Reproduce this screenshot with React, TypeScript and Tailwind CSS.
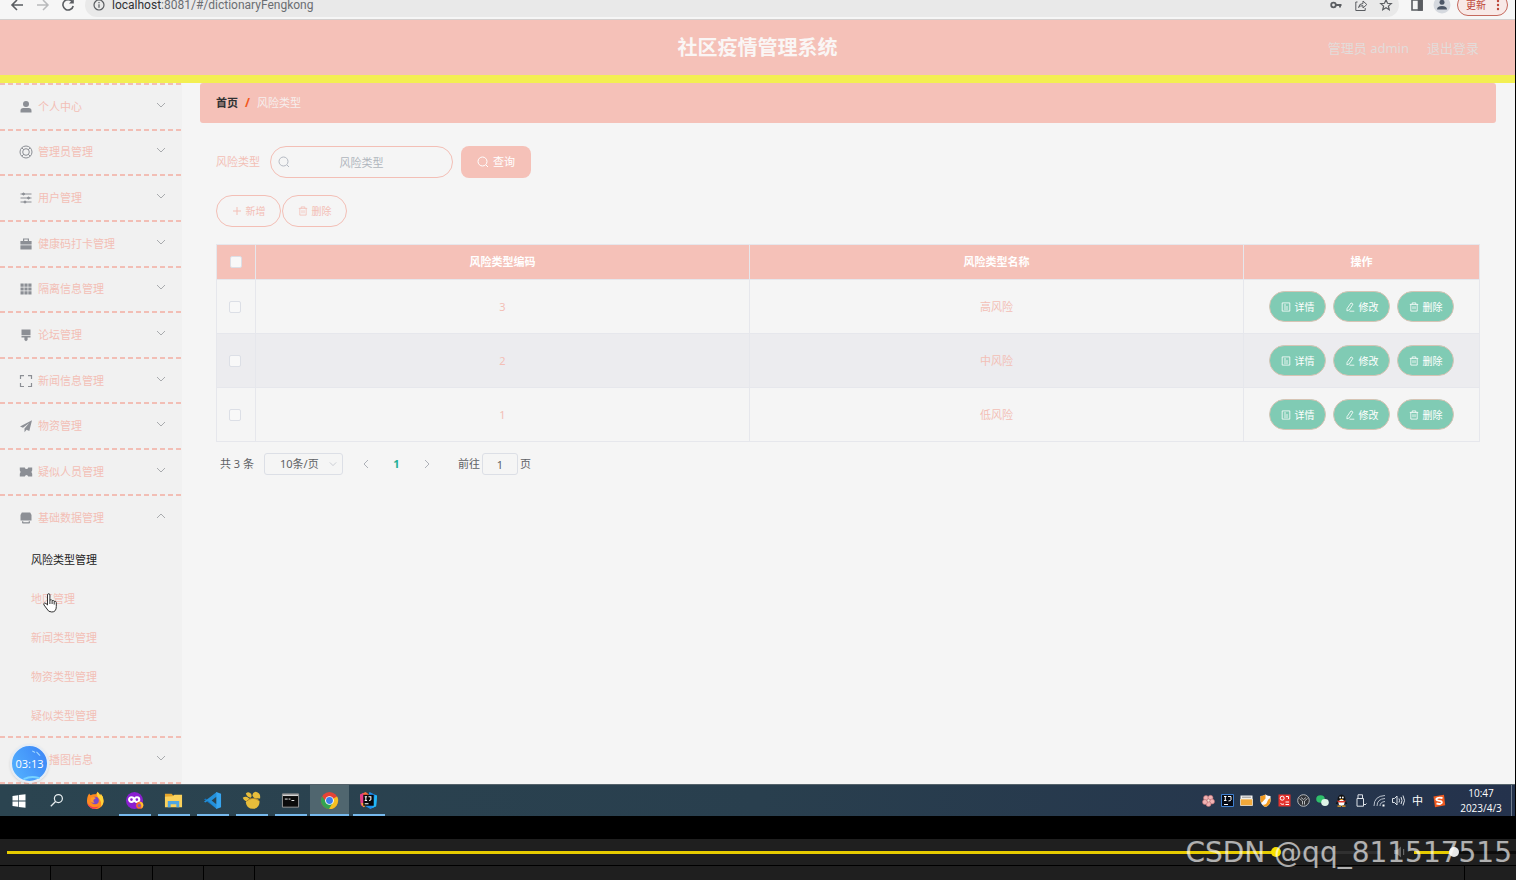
import { useState } from "react";
import type { ReactNode } from "react";

type IconProps = { className?: string };

const menuItems: { label: string; icon: ReactNode }[] = [
  {
    label: "个人中心",
    icon: (
      <g fill="currentColor">
        <circle cx="7" cy="4" r="3" />
        <path d="M1.5 12.5v-1.8Q1.5 8 4.3 8h5.4q2.8 0 2.8 2.7v1.8z" />
      </g>
    ),
  },
  {
    label: "管理员管理",
    icon: (
      <g fill="none" stroke="currentColor">
        <circle cx="7" cy="7" r="6" />
        <circle cx="7" cy="7" r="3.3" />
        <path d="M2.8 2.8l2 2M11.2 2.8l-2 2M2.8 11.2l2-2M11.2 11.2l-2-2" />
      </g>
    ),
  },
  {
    label: "用户管理",
    icon: (
      <g fill="currentColor" stroke="currentColor">
        <path d="M1.5 3h11M1.5 7h11M1.5 11h11" />
        <circle cx="4.5" cy="3" r="1" />
        <circle cx="9.5" cy="7" r="1" />
        <circle cx="6" cy="11" r="1" />
      </g>
    ),
  },
  {
    label: "健康码打卡管理",
    icon: (
      <g fill="currentColor">
        <path d="M4 4V1.5h6V4h2.6v3.5H1.4V4zm1.2 0h3.6V2.6H5.2z" fillRule="evenodd" />
        <path d="M1.4 8.3h11.2v4.2H1.4z" />
      </g>
    ),
  },
  {
    label: "隔离信息管理",
    icon: (
      <path
        fill="currentColor"
        d="M1.5 1.5h3.2v3.2H1.5zM5.4 1.5h3.2v3.2H5.4zM9.3 1.5h3.2v3.2H9.3zM1.5 5.4h3.2v3.2H1.5zM5.4 5.4h3.2v3.2H5.4zM9.3 5.4h3.2v3.2H9.3zM1.5 9.3h3.2v3.2H1.5zM5.4 9.3h3.2v3.2H5.4zM9.3 9.3h3.2v3.2H9.3z"
      />
    ),
  },
  {
    label: "论坛管理",
    icon: (
      <g fill="currentColor">
        <path d="M2.5 1.5h9v5.8h-9z" />
        <path d="M2.5 8h9v1.5H8.6V12L7 13.2 5.4 12V9.5H2.5z" />
      </g>
    ),
  },
  {
    label: "新闻信息管理",
    icon: (
      <path
        fill="none"
        stroke="currentColor"
        strokeWidth="1.2"
        d="M1.5 5V1.6H5M9 1.6h3.5V5M12.5 9v3.5H9M5 12.5H1.5V9"
      />
    ),
  },
  {
    label: "物资管理",
    icon: (
      <path fill="currentColor" d="M13 1.2 1 7.4l3 1.4 6.2-4.9-4.7 5.7v3.6l2-2.5 2.8 1.4z" />
    ),
  },
  {
    label: "疑似人员管理",
    icon: (
      <path
        fill="currentColor"
        d="M.8 2.5h5q.3 1.6 1.7 1.6T9.200 2.5h4v2.700q-1.600 1.800 0 3.600v2.700h-4q-.3-1.600-1.700-1.600t-1.700 1.600h-5V8.800q1.600-1.800 0-3.600z"
      />
    ),
  },
  {
    label: "基础数据管理",
    icon: (
      <g fill="currentColor">
        <path d="M2.8 1.5h8.4L12.5 4v5.5h-11V4z" />
        <path d="M3 10.2h8v1.3q0 1-1 1H4q-1 0-1-1z" />
        <path fill="#f1f1f1" d="M4.3 10h5.4v1.2H4.3z" />
      </g>
    ),
  },
];

const subItems = ["风险类型管理", "地区管理", "新闻类型管理", "物资类型管理", "疑似类型管理"];

const rows = [
  { code: 3, name: "高风险" },
  { code: 2, name: "中风险" },
  { code: 1, name: "低风险" },
];

const dashed =
  "bg-[repeating-linear-gradient(90deg,#f2beb5_0px,#f2beb5_5px,transparent_5px,transparent_8px)] bg-[length:100%_2px] bg-no-repeat";

function Chevron({ className }: IconProps) {
  return (
    <svg viewBox="0 0 10 10" className={className} fill="none" stroke="currentColor">
      <path d="M1 3l4 4 4-4" />
    </svg>
  );
}

function SearchIcon({ className }: IconProps) {
  return (
    <svg viewBox="0 0 12 12" className={className} fill="none" stroke="currentColor">
      <circle cx="5.5" cy="5.5" r="4.5" />
      <path d="M9 9l2 2" />
    </svg>
  );
}

function TrashIcon() {
  return (
    <svg viewBox="0 0 10 10" className="size-[10px]" fill="none" stroke="currentColor" strokeWidth=".8">
      <path d="M.8 2.4h8.4M3.2 2.4V.9h3.6v1.5M1.8 2.4v6.7h6.4V2.4M4 4.2v3M6 4.2v3" />
    </svg>
  );
}

function DetailIcon() {
  return (
    <svg viewBox="0 0 10 10" className="size-[10px]" fill="none" stroke="currentColor" strokeWidth=".8">
      <path d="M1.2.9h7.6v8.2H1.2zM3 3h2M3 5h4M3 7h4" />
    </svg>
  );
}

function EditIcon() {
  return (
    <svg viewBox="0 0 10 10" className="size-[10px]" fill="none" stroke="currentColor" strokeWidth=".8">
      <path d="M6 .9l2 1.2-3.7 5.8-2.4 1 .2-2.4zM4.5 9.2h4.8" />
    </svg>
  );
}

function BrowserBar() {
  return (
    <div className="h-5 overflow-hidden border-b border-[#d3cfce] bg-[#f6f6f6]">
      <div className="-mt-[7px] flex h-6 items-center text-[#5a5d61]">
        <button aria-label="后退" className="ml-2.5">
          <svg viewBox="0 0 14 14" className="size-[14px]" fill="none" stroke="currentColor" strokeWidth="1.6">
            <path d="M13 7H2M7 2L2 7l5 5" />
          </svg>
        </button>
        <button aria-label="前进" className="ml-3 text-[#b9babc]">
          <svg viewBox="0 0 14 14" className="size-[14px]" fill="none" stroke="currentColor" strokeWidth="1.5">
            <path d="M1 7h11M7 2l5 5-5 5" />
          </svg>
        </button>
        <button aria-label="重新加载" className="ml-[11px]">
          <svg viewBox="0 0 14 14" className="size-[14px]" fill="none" stroke="currentColor" strokeWidth="1.6">
            <path d="M11.5 4A5.200 5.200 0 1 0 12.200 8" />
            <path d="M12.800.8v4.700H8z" fill="currentColor" stroke="none" />
          </svg>
        </button>
        <div className="ml-2.5 flex h-6 min-w-0 flex-1 items-center rounded-full bg-[#e9e9e9] pl-2 pr-1.5">
          <svg viewBox="0 0 12 12" className="size-3" fill="none" stroke="currentColor" strokeWidth="1.2">
            <circle cx="6" cy="6" r="5" />
            <path d="M6 5.2v3.6M6 3v1.2" />
          </svg>
          <p className="ml-[7px] flex-1 font-[Roboto,'Noto_Sans_CJK_SC',sans-serif] text-[12px] leading-4 text-[#6b6e72]">
            <span className="text-[#303134]">localhost</span>:8081/#/dictionaryFengkong
          </p>
          <svg viewBox="0 0 12 12" className="size-3" fill="none" stroke="currentColor" strokeWidth="1.8">
            <circle cx="3.5" cy="6" r="2.3" />
            <path d="M6 6h5.5M10 6v2.5" />
          </svg>
          <svg viewBox="0 0 14 14" className="ml-3 size-[14px]" fill="none" stroke="currentColor">
            <path d="M3.5 4H1.8v8.5h9.4V10M4.500 9.500q.5-4 4.500-4V3l3.800 3.500L9 10V7.700Q6 7.500 4.500 9.500z" />
          </svg>
          <svg viewBox="0 0 14 14" className="ml-[11px] size-[14px]" fill="none" stroke="currentColor" strokeWidth="1.2">
            <path d="M7 1.8l1.5 3.500 3.800.3-2.900 2.500.9 3.700L7 9.800l-3.300 2 .9-3.700-2.900-2.500 3.800-.3z" />
          </svg>
        </div>
        <svg viewBox="0 0 12 12" className="ml-3 size-3" fill="none" stroke="currentColor" strokeWidth="1.6">
          <path d="M1 1h10v10H1z" />
          <path d="M7.5 1H11v10H7.5z" fill="currentColor" />
        </svg>
        <svg viewBox="0 0 18 18" className="ml-2.5 size-[18px]">
          <circle cx="9" cy="9" r="8.5" fill="#d5d9df" />
          <circle cx="9" cy="6.3" r="2.5" fill="#4c5767" />
          <path d="M4 13.5q0-3.500 5-3.500t5 3.500z" fill="#4c5767" />
        </svg>
        <button className="ml-1.5 mr-[7px] flex h-[22px] items-center justify-between rounded-full border border-[#c5695d] bg-[#f8e9e7] pl-2 pr-[7px] text-[10px] leading-4 text-[#bd4437]">
          更新
          <svg viewBox="0 0 4 14" className="ml-2.5 h-[14px] w-1" fill="currentColor">
            <circle cx="2" cy="3" r="1.2" />
            <circle cx="2" cy="7" r="1.2" />
            <circle cx="2" cy="11" r="1.2" />
          </svg>
        </button>
      </div>
    </div>
  );
}

function Sidebar() {
  const item = "flex h-full w-full items-center pl-[19px] pr-4 pt-0.5 text-left";

  return (
    <nav className="relative flex w-[182px] shrink-0 bg-[#f1f1f1] text-[11px] leading-4 text-[#f3bfb6]">
      <ul className="flex flex-1 flex-col">
        {menuItems.map((m, i) => (
          <li key={m.label} className={`min-h-10 flex-1 ${dashed}`}>
            <button className={item}>
              <svg viewBox="0 0 14 14" className="size-[14px] text-[#8c8f95]">
                {m.icon}
              </svg>
              <span className="ml-[5px] flex-1">{m.label}</span>
              <Chevron
                className={`mb-1 size-2.5 text-[#a9abae] ${i === menuItems.length - 1 ? "rotate-180" : ""}`}
              />
            </button>
          </li>
        ))}
        <li className="pb-px pt-px">
          <ul>
            {subItems.map((label, i) => (
              <li key={label}>
                <a
                  href="#"
                  className={`flex h-[39px] items-center pl-[31px] ${i === 0 ? "text-[#222]" : ""}`}
                >
                  {label}
                </a>
              </li>
            ))}
          </ul>
        </li>
        <li className={`min-h-10 flex-1 ${dashed}`}>
          <button className={item}>
            <span className="ml-[19px] flex-1">轮播图信息</span>
            <Chevron className="mb-1 size-2.5 text-[#a9abae]" />
          </button>
        </li>
        <li className={`h-0.5 ${dashed}`} />
      </ul>

      {/* recorder bubble */}
      <div className="absolute bottom-px left-2.5 flex size-[39px] items-center justify-center rounded-full border-2 border-[#e4ecf5] bg-[linear-gradient(60deg,#55b4ff,#3b83f6)] text-[11px] text-white shadow">
        <svg viewBox="0 0 34 34" className="absolute inset-0" fill="none" stroke="#a5dcff" strokeLinecap="round">
          <path d="M20 5l2 1M24 6l3 3" />
          <path d="M12 32q6-3 14-1" stroke="#78d3ff" strokeWidth="2" />
        </svg>
        <span className="relative font-['Open_Sans',sans-serif]">03:13</span>
      </div>

      <svg viewBox="0 0 14 20" className="absolute left-[43px] top-[510px] h-5 w-3.5">
        <path
          d="M4.5 12V2q0-1.300 1.200-1.300T6.900 2v5q2-.8 2.200.6 1.800-.6 2 .7 2-.4 2.200 1.200v4q0 5.500-4.500 5.500-3.600 0-4.800-3L1 12q-.8-1.600.6-2 1.300 0 2.900 2z"
          fill="#fff"
          stroke="#333"
        />
        <path d="M6.9 7v4M9.100 8v3M11.200 8.500v3" stroke="#333" />
      </svg>
    </nav>
  );
}

function RiskTable() {
  const cell = "border border-[#e6e7ec] p-0";
  const box =
    "block size-3 appearance-none rounded-[2px] border border-[#dcdfe6] bg-[#f8f8f8] checked:bg-[#80cbb4]";
  const action =
    "flex h-[31px] w-[57px] items-center justify-center gap-1 rounded-full border border-[#d6c4b4] bg-[#80cbb4] text-[10px] text-white";

  return (
    <table className="mt-[17px] w-full table-fixed border-collapse text-center text-[11px] leading-4 text-[#f3bfb6]">
      <colgroup>
        <col className="w-[39px]" />
        <col />
        <col />
        <col className="w-[236px]" />
      </colgroup>
      <thead>
        <tr className="h-[35px] bg-[#f5c1b8] text-white">
          <th className={cell}>
            <input type="checkbox" aria-label="全选" className={`${box} mx-auto`} />
          </th>
          <th className={cell}>风险类型编码</th>
          <th className={cell}>风险类型名称</th>
          <th className={cell}>操作</th>
        </tr>
      </thead>
      <tbody>
        {rows.map((row) => (
          <tr key={row.code} className="h-[54px] even:bg-[#ececef]">
            <td className={cell}>
              <input type="checkbox" aria-label={row.name} className={`${box} ml-3`} />
            </td>
            <td className={cell}>{row.code}</td>
            <td className={cell}>{row.name}</td>
            <td className={cell}>
              <div className="flex justify-center gap-[7px]">
                <button className={action}>
                  <DetailIcon />
                  详情
                </button>
                <button className={action}>
                  <EditIcon />
                  修改
                </button>
                <button className={action}>
                  <TrashIcon />
                  删除
                </button>
              </div>
            </td>
          </tr>
        ))}
      </tbody>
    </table>
  );
}

function Pagination() {
  const [page, setPage] = useState("1");

  return (
    <div className="mt-[11px] flex h-[22px] items-center pl-1 text-[11px] leading-4 text-[#606266]">
      <span>共 3 条</span>
      <div className="relative ml-2.5">
        <select
          aria-label="每页条数"
          className="h-[22px] w-[79px] appearance-none rounded-[3px] border border-[#dcdfe6] pl-[15px] text-[11px]"
        >
          <option>10条/页</option>
        </select>
        <Chevron className="pointer-events-none absolute right-1.5 top-[7px] size-2 text-[#c0c4cc]" />
      </div>
      <button aria-label="上一页" className="ml-[18px] text-[#aeb1b8]">
        <Chevron className="size-2.5 rotate-90" />
      </button>
      <button className="w-[51px] font-bold text-[#1fb096]">1</button>
      <button aria-label="下一页" className="text-[#aeb1b8]">
        <Chevron className="size-2.5 -rotate-90" />
      </button>
      <label className="ml-[26px] flex items-center gap-0.5">
        前往
        <input
          value={page}
          onChange={(e) => setPage(e.target.value)}
          className="h-[22px] w-9 rounded-[3px] border border-[#dcdfe6] text-center"
        />
        页
      </label>
    </div>
  );
}

function Content() {
  const outline =
    "flex h-8 w-[65px] items-center justify-center gap-1 rounded-full border border-[#f3bfb6] text-[10px] text-[#f3bfb6]";

  return (
    <main className="ml-[18px] mr-[19px] min-w-0 flex-1 text-[11px] leading-4">
      <div className="flex h-10 items-center rounded-[3px] bg-[#f5c1b8] px-4">
        <a href="#" className="font-bold text-[#303133]">
          首页
        </a>
        <span className="mx-[7px] text-[12px] font-bold text-[#f2581c]">/</span>
        <span className="text-[#f6efee]">风险类型</span>
      </div>

      <div className="px-4">
        <form className="mt-[23px] flex items-center" onSubmit={(e) => e.preventDefault()}>
          <label htmlFor="risk" className="text-[#f3bfb6]">
            风险类型
          </label>
          <div className="relative ml-2.5">
            <input
              id="risk"
              placeholder="风险类型"
              className="h-8 w-[183px] rounded-full border border-[#f3bfb6] px-6 text-center placeholder:text-[#b0b5bd]"
            />
            <SearchIcon className="absolute left-2 top-[10px] size-3 text-[#b4b9c2]" />
          </div>
          <button className="ml-2 flex h-8 w-[70px] items-center justify-center gap-1 rounded-lg bg-[#f5c1b8] text-white">
            <SearchIcon className="size-3" />
            查询
          </button>
        </form>

        <div className="mt-[17px] flex gap-px">
          <button className={outline}>
            <svg viewBox="0 0 10 10" className="size-[10px]" fill="none" stroke="currentColor">
              <path d="M5 1v8M1 5h8" />
            </svg>
            新增
          </button>
          <button className={outline}>
            <TrashIcon />
            删除
          </button>
        </div>

        <RiskTable />
        <Pagination />
      </div>
    </main>
  );
}

const apps: { name: string; state: string; icon: ReactNode }[] = [
  {
    name: "搜索",
    state: "",
    icon: (
      <g fill="none" stroke="#e8eef0" strokeWidth="1.3">
        <circle cx="12" cy="8" r="4.2" />
        <path d="M9 11l-5 5" />
      </g>
    ),
  },
  {
    name: "Firefox",
    state: "",
    icon: (
      <>
        <path
          fill="#ff8a1f"
          d="M2 5q1-2 1.500-2.500Q4 4 5 4.500 7 2.800 10 3.500 11.500 2.500 12 .8q2 1.500 3 4 .6-.8.5-1.800 3 3 3 7.500c0 5-3.800 8.500-8.500 8.500S1 15.500 1 10.500Q1 7.500 2 5z"
        />
        <path fill="#ffd43a" d="M12 .8q2 1.500 3 4 .6-.8.5-1.800 3 3 3 7.500 0 4-3 6.300Q17 12 14 8.500 10.500 5 12 .8z" />
        <path fill="#f3365c" d="M1 10q.5 5 5 6.500 4 1.300 7.500-.5-2 3-5.500 2.900Q1.500 18 1 10z" />
        <circle cx="9.5" cy="10" r="4" fill="#7b48c8" />
        <path fill="#ff9a2c" d="M5 7q3-1.500 5.500.3L8 9.200q-1 2 1 2.800-3 1-4.300-1.500z" />
      </>
    ),
  },
  {
    name: "无限",
    state: "open",
    icon: (
      <>
        <circle cx="10" cy="10" r="9" fill="#8a1fd0" />
        <g fill="none" stroke="#fff" strokeWidth="2.2">
          <circle cx="6.8" cy="9" r="2.5" />
          <circle cx="12.5" cy="9" r="2.5" />
        </g>
        <circle cx="15.5" cy="15" r="3.8" fill="#f36a2f" />
        <path fill="#ffc32e" d="M15 11q4 0 4.300 4-.6 2.500-2 3.300.6-4-2.300-7.300z" />
        <circle cx="15" cy="15.3" r="1.6" fill="#8457c9" />
      </>
    ),
  },
  {
    name: "资源管理器",
    state: "open",
    icon: (
      <>
        <path fill="#e5a52b" d="M1 3h7l2 2v3H1z" />
        <path fill="#fbd15b" d="M1 6l8-.5L11 4h8v13H1z" />
        <path fill="#4fa6e3" d="M4 10.5h12V17h-3v-3H7v3H4z" />
      </>
    ),
  },
  {
    name: "VS Code",
    state: "open",
    icon: (
      <>
        <path fill="#1673bd" d="M14.500 1 5 9.800 2.500 8 1 8.800 14.500 19z" />
        <path fill="#2390da" d="M14.500 19 5 10.200 2.500 12 1 11.200 14.500 1z" />
        <path fill="#36a5f0" d="M14 1l5 2v14l-5 2V14L9 10l5-4z" />
        <path fill="#284352" d="M14 6v8L9 10z" />
      </>
    ),
  },
  {
    name: "Navicat",
    state: "open",
    icon: (
      <>
        <g fill="#e8bd3b">
          <path d="M4 12q0-4 7-4.500 6-.5 7.500 3.500 0 7-6.500 7.800Q5 19 4 12z" />
          <path d="M.8 7q3-2 6.500.5 1.500 2-1 3-4 .5-5.500-3.500z" />
          <path d="M4 2.500q3-2.500 5.500.5 1.500 3-.5 4Q5.500 6.500 4 2.500z" />
          <path d="M11 5q0-3.500 3.500-4.200 5.500 1.200 4.500 7Q16 8 12.500 7z" />
        </g>
        <path d="M4.500 11q3-3 6.500-3.300 4-.3 7.500 3" fill="none" stroke="#9b7222" strokeWidth=".8" />
      </>
    ),
  },
  {
    name: "命令提示符",
    state: "open",
    icon: (
      <>
        <path fill="#0b0b0b" stroke="#9a9a9a" d="M1.500 3h17v14h-17z" />
        <path fill="#d5d5d5" d="M2 3.500h16v1.800H2z" />
        <path stroke="#eee" d="M4 8.500h3M8 8.500h2M11 10h3" />
      </>
    ),
  },
  {
    name: "Chrome",
    state: "active",
    icon: (
      <>
        <circle cx="10" cy="10" r="9" fill="#e54335" />
        <path fill="#f6c022" d="M10 10l8-4.200A9 9 0 0 1 9.500 19z" />
        <path fill="#34a350" d="M2.200 5.500A9 9 0 0 0 9.500 19l4-7H7z" />
        <circle cx="10" cy="10" r="4.6" fill="#fff" />
        <circle cx="10" cy="10" r="3.6" fill="#3b7ded" />
      </>
    ),
  },
  {
    name: "IntelliJ IDEA",
    state: "open",
    icon: (
      <>
        <path fill="#fc6b3b" d="M1 4l6-3 5 4-6 11-4-2z" />
        <path fill="#e63b87" d="M1 4l3-2 3 8-2 7-3-2z" />
        <path fill="#ffb32c" d="M2 13l3 4 5-4z" />
        <path fill="#1d8ff0" d="M11 1l8 4-1 11-6 3-5-3z" />
        <path fill="#21b8f5" d="M17 4l2 1-1 11-4 2z" />
        <path fill="#08080a" d="M4.500 4h11v11.500h-11z" />
        <path fill="none" stroke="#fff" strokeWidth="1.1" d="M6 6h2.500M7.200 6v4M6 10h2.500M10 6h2.500v3q0 1-2 1M6 13.500h4" />
      </>
    ),
  },
];

const tray: { name: string; icon: ReactNode }[] = [
  {
    name: "花",
    icon: (
      <g fill="#f1b3b3" stroke="#b86a70" strokeWidth=".6">
        <circle cx="4" cy="4" r="2.5" />
        <circle cx="8.5" cy="3.8" r="2.5" />
        <circle cx="10" cy="7.5" r="2.5" />
        <circle cx="6.5" cy="10" r="2.5" />
        <circle cx="3" cy="8" r="2.5" />
        <circle cx="6.5" cy="6.5" r="1.5" fill="#f7e5d6" />
      </g>
    ),
  },
  {
    name: "IDEA",
    icon: (
      <>
        <path fill="#070b14" stroke="#3f80d0" d="M.5.5h12v12H.5z" />
        <path fill="none" stroke="#fff" d="M3 2.500h2.500M4.300 2.500V7M3 6.500h2.500M7 2.500h3v3.400q0 1-2.500 1M3 10.500h4" />
      </>
    ),
  },
  {
    name: "窗口",
    icon: (
      <>
        <path fill="#f3f3f3" d="M.5 1.500h12v4H.5z" />
        <path fill="#f2a93a" stroke="#f3e8d5" strokeWidth=".8" d="M.5 5h12v6.500H.5z" />
        <path stroke="#7a7a7a" strokeWidth=".8" d="M2 3.200h9" />
      </>
    ),
  },
  {
    name: "安全",
    icon: (
      <>
        <path fill="#fbfbfb" d="M6.500.5q2.500 1.500 5 1.500v5q-.5 4-5 6-4.500-2-5-6V2q2.500 0 5-1.500z" />
        <path fill="#f29b1f" d="M6.500.5v4l-3.800 4.200Q1.500 8 1.500 7V2q2.500 0 5-1.500zM11.500 4v3q-.5 4-5 6-2-1-3-2.500 4 1 5-3.500.5-2 3-3z" />
      </>
    ),
  },
  {
    name: "录屏",
    icon: (
      <>
        <path fill="#e5322d" d="M.5.5h12v12H.5z" />
        <g fill="none" stroke="#fff">
          <circle cx="4.2" cy="4.2" r="2" />
          <path d="M8 2.500h2.500v2.500M2.500 9.500q1.500 1.500 3.500.5M7.500 8h3.500M7.500 10.500h3.500" />
        </g>
      </>
    ),
  },
  {
    name: "圆盘",
    icon: (
      <g fill="#303338" stroke="#b7babd">
        <circle cx="6.5" cy="6.5" r="5.8" />
        <path d="M5.500 10.500V7L2.500 4.500M7.500 10.500V7l3-2.500M4 3.500l2.500 2 2.500-2" />
      </g>
    ),
  },
  {
    name: "微信",
    icon: (
      <>
        <ellipse cx="4.5" cy="5" rx="4.3" ry="3.8" fill="#2fbf6b" />
        <ellipse cx="9" cy="8.5" rx="3.8" ry="3.4" fill="#dff3e7" />
      </>
    ),
  },
  {
    name: "QQ",
    icon: (
      <>
        <ellipse cx="6.5" cy="6" rx="4" ry="5.5" fill="#111" />
        <path fill="#111" d="M2.500 6L.8 10h2zM10.500 6l1.700 4h-2z" />
        <ellipse cx="6.5" cy="8.8" rx="3" ry="3" fill="#fff" />
        <path fill="#e23a2e" d="M2.500 6.200q4 1.800 8 0v1.500q-4 1.800-8 0z" />
        <circle cx="5.2" cy="3.5" r=".9" fill="#fff" />
        <circle cx="7.8" cy="3.5" r=".9" fill="#fff" />
        <path fill="#f0a022" d="M4.500 5h4l-2 1.200zM2.500 11.500h3.500v1.200H2.500zM7 11.500h3.500v1.200H7z" />
      </>
    ),
  },
  {
    name: "USB",
    icon: (
      <path
        fill="none"
        stroke="#dde2e8"
        d="M4 4.500V.8h4.500v3.700M3 4.500h6.500v7.700H3zM9.500 9.500l1.500 1.500 1.500-1.500"
      />
    ),
  },
  {
    name: "网络",
    icon: (
      <g fill="none" stroke="#b9c1cc">
        <path d="M1 12Q1 2 12 1.500M4 12q0-7 8-7.500M7 12q0-4 5-4.500" />
        <path d="M9.500 11.500h2" stroke="#fff" strokeWidth="2" />
      </g>
    ),
  },
  {
    name: "音量",
    icon: (
      <path
        fill="none"
        stroke="#dde2e8"
        d="M.5 4.500h2L5 2v9L2.500 8.500h-2zM7 4.500q1 2 0 4M9 3q2 3.500 0 7M11 1.500q3 5 0 10"
      />
    ),
  },
];

function Taskbar() {
  return (
    <div className="flex h-8 items-stretch border-t border-[#55636b] bg-[linear-gradient(90deg,#2b4450_0%,#293f4e_50%,#24324c_100%)]">
      <button aria-label="开始" className="flex w-[37px] items-center justify-center">
        <svg viewBox="0 0 14 14" className="size-[14px]" fill="#fff">
          <path d="M.5 2l5.500-.8v5.400H.5zM6.700 1.100 13.500.2v6.400H6.700zM.5 7.400H6v5.400l-5.500-.8zM6.700 7.400h6.800v6.400l-6.800-.9z" />
        </svg>
      </button>
      {apps.map((app) => (
        <button
          key={app.name}
          aria-label={app.name}
          className={`flex w-[39px] flex-col items-center justify-end ${app.state === "active" ? "bg-[#50666f]" : ""}`}
        >
          <svg viewBox="0 0 20 20" className="mb-1 size-[19px]">
            {app.icon}
          </svg>
          <span
            className={`h-0.5 ${app.state === "active" ? "w-full bg-[#76b9ed]" : app.state === "open" ? "w-8 bg-[#76b9ed]" : "w-8"}`}
          />
        </button>
      ))}

      <div className="ml-auto flex items-center text-white">
        {tray.map((t) => (
          <button key={t.name} aria-label={t.name} className="flex w-[19px] justify-center">
            <svg viewBox="0 0 13 13" className="size-[13px]">
              {t.icon}
            </svg>
          </button>
        ))}
        <span className="w-[19px] text-center text-[11px] leading-4">中</span>
        <svg viewBox="0 0 14 14" className="mx-[5px] size-[14px]">
          <path fill="#ef5a20" d="M1.500 2.500 12 .8l1.200 10.500L3 13.200z" />
          <path fill="none" stroke="#fff" strokeWidth="1.8" d="M10.500 4q-5-1-6 .8T9 7.200q2 1.500-.5 2.600-2 .5-4-.4" />
        </svg>
        <p className="w-[60px] text-center font-['Open_Sans',sans-serif] text-[10px] leading-[15px]">
          10:47
          <br />
          2023/4/3
        </p>
      </div>
      <div className="w-1 border-l border-[#6f7b8c]" />
    </div>
  );
}

function Player() {
  const [time, setTime] = useState(927);
  const [volume, setVolume] = useState(380);
  const range =
    "h-[3px] appearance-none [&::-webkit-slider-thumb]:size-2.5 [&::-webkit-slider-thumb]:appearance-none [&::-webkit-slider-thumb]:rounded-full";
  const fill = (value: number, rest: string) => ({
    background: `linear-gradient(90deg, #e6cb00 ${value / 10}%, ${rest} ${value / 10}%)`,
  });

  return (
    <div className="relative bg-[#1f1f1f]">
      <div className="flex h-[26px] items-center pl-[7px]">
        <input
          type="range"
          aria-label="播放进度"
          max={1000}
          value={time}
          onChange={(e) => setTime(Number(e.target.value))}
          style={fill(time, "#303030")}
          className={`${range} min-w-0 flex-1 [&::-webkit-slider-thumb]:bg-[#f7e000]`}
        />
        <svg viewBox="0 0 12 12" className="ml-3.5 size-3" fill="#666">
          <path d="M0 4h3l4-3.500v11L3 8H0zM9 3h1.200v6H9z" />
        </svg>
        <input
          type="range"
          aria-label="音量"
          max={1000}
          value={volume}
          onChange={(e) => setVolume(Number(e.target.value))}
          style={fill(volume, "#0c0c0c")}
          className={`${range} ml-2 w-[102px] [&::-webkit-slider-thumb]:bg-[#e8e8e8]`}
        />
      </div>
      <div className="flex h-[15px] border-t border-black">
        {[0, 1, 2, 3, 4].map((n) => (
          <span key={n} className="w-[51px] border-r border-black" />
        ))}
        <span className="ml-auto w-[52px] border-l border-black" />
      </div>
      <p className="pointer-events-none absolute right-1 top-0 font-['DejaVu_Sans',sans-serif] text-[28px] leading-7 text-white/65">
        CSDN @qq_811517515
      </p>
    </div>
  );
}

export default function App() {
  return (
    <div className="flex min-h-screen flex-col bg-black font-['Noto_Sans','Noto_Sans_CJK_SC',sans-serif]">
      <div className="flex flex-1 flex-col border-r border-black bg-[#f5f5f5]">
        <BrowserBar />
        <header className="grid h-[63px] grid-cols-[1fr_auto_1fr] items-center border-b-8 border-[#f3ef52] bg-[#f5c1b8] pt-px">
          <h1 className="col-start-2 text-[20px] font-bold leading-7 text-[#faf6f5]">
            社区疫情管理系统
          </h1>
          <div className="flex justify-end gap-[18px] pr-9 text-[13px] leading-5 text-[#e3dcda]">
            <span>管理员 admin</span>
            <a href="#">退出登录</a>
          </div>
        </header>
        <div className="flex flex-1">
          <Sidebar />
          <Content />
        </div>
        <Taskbar />
      </div>
      <div className="h-[23px]" />
      <Player />
    </div>
  );
}
